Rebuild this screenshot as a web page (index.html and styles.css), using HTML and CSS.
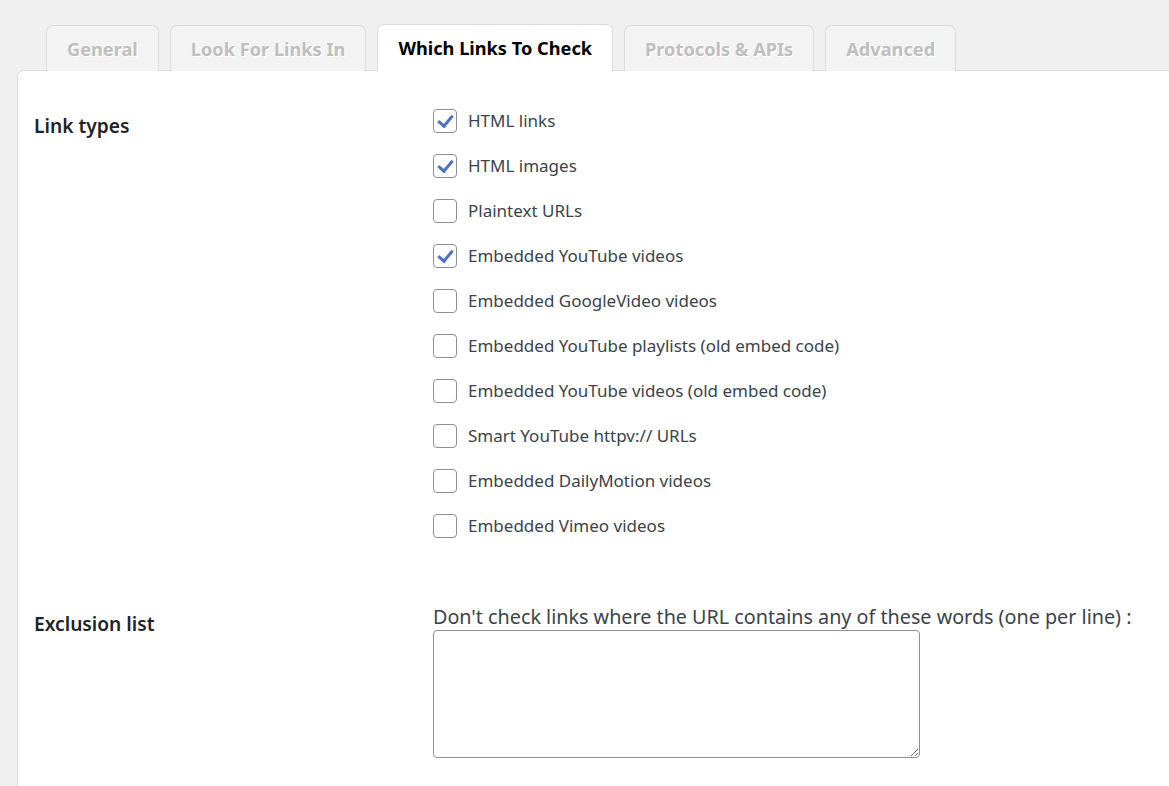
FILE: index.html
```html
<!DOCTYPE html>
<html lang="en">
<head>
<meta charset="utf-8">
<title>Which Links To Check</title>
<link rel="stylesheet" href="styles.css">
</head>
<body>
<nav class="tabs">
  <a class="tab">General</a>
  <a class="tab">Look For Links In</a>
  <a class="tab active">Which Links To Check</a>
  <a class="tab">Protocols &amp; APIs</a>
  <a class="tab">Advanced</a>
</nav>
<main class="panel">
  <section class="row">
    <div class="th th-types">Link types</div>
    <div class="checks">
      <label class="check"><span class="box on"></span>HTML links</label>
      <label class="check"><span class="box on"></span>HTML images</label>
      <label class="check"><span class="box"></span>Plaintext URLs</label>
      <label class="check"><span class="box on"></span>Embedded YouTube videos</label>
      <label class="check"><span class="box"></span>Embedded GoogleVideo videos</label>
      <label class="check"><span class="box"></span>Embedded YouTube playlists (old embed code)</label>
      <label class="check"><span class="box"></span>Embedded YouTube videos (old embed code)</label>
      <label class="check"><span class="box"></span>Smart YouTube httpv:// URLs</label>
      <label class="check"><span class="box"></span>Embedded DailyMotion videos</label>
      <label class="check"><span class="box"></span>Embedded Vimeo videos</label>
    </div>
  </section>
  <section class="row row-excl">
    <div class="th th-excl">Exclusion list</div>
    <div class="excl">
      <p class="desc">Don't check links where the URL contains any of these words (one per line) :</p>
      <textarea class="area"></textarea>
    </div>
  </section>
</main>
</body>
</html>
```
FILE: styles.css
```css
html, body {
  margin: 0;
  padding: 0;
}
body {
  background: #f0f0f0;
  font-family: "Noto Sans", "Open Sans", sans-serif;
  color: #3c434a;
  height: 786px;
  overflow: hidden;
}
.tabs {
  display: flex;
  align-items: flex-end;
  gap: 11px;
  padding: 24px 0 0 46px;
  position: relative;
  z-index: 2;
  margin-bottom: -1px;
}
.tab {
  box-sizing: border-box;
  height: 46px;
  display: flex;
  align-items: center;
  padding: 0 20px;
  background: #f3f3f3;
  border: 1px solid #dcdcde;
  border-bottom: none;
  border-radius: 7px 7px 0 0;
  font-size: 18.2px;
  font-weight: 700;
  color: #bfbfbf;
  text-shadow: 1px 1px 0 #fff;
  cursor: default;
  white-space: nowrap;
}
.tab.active {
  background: #fff;
  color: #000;
  height: 47px;
  text-shadow: none;
}
.panel {
  margin-left: 17px;
  background: #fff;
  border: 1px solid #dcdcde;
  border-right: none;
  border-bottom: none;
  border-top-left-radius: 7px;
  height: 716px;
  box-sizing: border-box;
  padding-top: 38px;
}
.row {
  display: grid;
  grid-template-columns: 399px 1fr;
  padding-left: 16px;
}
.th {
  font-size: 19.2px;
  font-weight: 600;
  color: #1d2327;
  line-height: 24px;
}
.th-types {
  padding-top: 5px;
}
.checks {
  display: flex;
  flex-direction: column;
  gap: 21px;
}
.check {
  display: flex;
  align-items: center;
  height: 24px;
  line-height: 22px;
  font-size: 17px;
  color: #3c434a;
}
.box {
  box-sizing: border-box;
  width: 24px;
  height: 24px;
  border: 1px solid #8c8f94;
  border-radius: 4px;
  background: #fff;
  margin-right: 11px;
  flex: none;
  position: relative;
}
.box.on::after {
  content: "";
  position: absolute;
  left: 7px;
  top: 2px;
  width: 6px;
  height: 12px;
  border: solid #4f72c4;
  border-width: 0 3px 3px 0;
  transform: rotate(40deg);
}
.row-excl {
  margin-top: 67px;
}
.th-excl {
  padding-top: 7px;
}
.desc {
  margin: 0;
  font-size: 19.75px;
  line-height: 24px;
  color: #3c434a;
  white-space: nowrap;
}
.area {
  display: block;
  box-sizing: border-box;
  width: 487px;
  height: 128px;
  margin-top: 1px;
  border: 1px solid #8c8f94;
  border-radius: 4px;
  background: #fff;
  font-family: inherit;
  resize: vertical;
}
```
